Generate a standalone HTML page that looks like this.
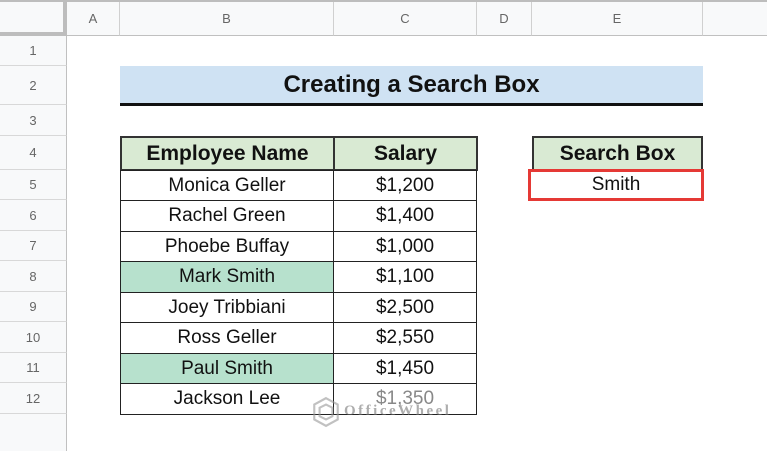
<!DOCTYPE html>
<html><head><style>
body{margin:0;width:767px;height:451px;overflow:hidden;background:#fff;font-family:"Liberation Sans",Arial,sans-serif;position:relative}
div{position:absolute;box-sizing:border-box}
.ch{top:2px;height:34px;background:#f8f9fa;border-right:1px solid #d0d0d0;border-bottom:1px solid #c0c0c0;color:#666;font-size:13px;text-align:center;line-height:33px}
.rh{left:0;width:67px;background:#f8f9fa;border-right:1px solid #c0c0c0;border-bottom:1px solid #d8d8d8;color:#666;font-size:13px;text-align:center}
.c{font-size:19px;color:#111;text-align:center;border:1px solid #222}
.h{background:#d9ead3;font-weight:bold;font-size:21px;border:2px solid #333}
.g{background:#b7e1cd}
</style></head><body>
<div style="left:0;top:0;width:767px;height:2px;background:#bdbdbd"></div>
<div class="ch" style="left:0;width:67px;border-right:4px solid #bdbdbd;border-bottom:4px solid #bdbdbd"></div>
<div class="ch" style="left:67px;width:53px">A</div>
<div class="ch" style="left:120px;width:214px">B</div>
<div class="ch" style="left:334px;width:143px">C</div>
<div class="ch" style="left:477px;width:55px">D</div>
<div class="ch" style="left:532px;width:171px">E</div>
<div class="ch" style="left:703px;width:64px;border-right:none"></div>
<div class="rh" style="top:36px;height:30px;line-height:30px">1</div>
<div class="rh" style="top:66px;height:39px;line-height:39px">2</div>
<div class="rh" style="top:105px;height:31px;line-height:31px">3</div>
<div class="rh" style="top:136px;height:34px;line-height:34px">4</div>
<div class="rh" style="top:170px;height:30px;line-height:30px">5</div>
<div class="rh" style="top:200px;height:31px;line-height:31px">6</div>
<div class="rh" style="top:231px;height:30px;line-height:30px">7</div>
<div class="rh" style="top:261px;height:31px;line-height:31px">8</div>
<div class="rh" style="top:292px;height:30px;line-height:30px">9</div>
<div class="rh" style="top:322px;height:31px;line-height:31px">10</div>
<div class="rh" style="top:353px;height:30px;line-height:30px">11</div>
<div class="rh" style="top:383px;height:31px;line-height:31px">12</div>
<div class="rh" style="top:414px;height:37px;border-bottom:none"></div>

<div style="left:120px;top:66px;width:583px;height:40px;background:#cfe2f3;border-bottom:3px solid #111;font-weight:bold;font-size:24px;text-align:center;line-height:38px;color:#111">Creating a Search Box</div>

<div class="c h" style="left:120px;top:136px;width:215px;height:35px;line-height:31px">Employee Name</div>
<div class="c h" style="left:333px;top:136px;width:145px;height:35px;line-height:31px">Salary</div>
<div class="c h" style="left:532px;top:136px;width:171px;height:35px;line-height:31px">Search Box</div>
<div style="left:528px;top:169px;width:176px;height:32px;border:3px solid #e53935;font-size:19px;text-align:center;line-height:26px;color:#111">Smith</div>

<div class="c" style="left:120px;top:170px;width:214px;height:31px;line-height:30px">Monica Geller</div>
<div class="c" style="left:333px;top:170px;width:144px;height:31px;line-height:30px">$1,200</div>
<div class="c" style="left:120px;top:200px;width:214px;height:32px;line-height:30px">Rachel Green</div>
<div class="c" style="left:333px;top:200px;width:144px;height:32px;line-height:30px">$1,400</div>
<div class="c" style="left:120px;top:231px;width:214px;height:31px;line-height:29px">Phoebe Buffay</div>
<div class="c" style="left:333px;top:231px;width:144px;height:31px;line-height:29px">$1,000</div>
<div class="c g" style="left:120px;top:261px;width:214px;height:32px;line-height:30px">Mark Smith</div>
<div class="c" style="left:333px;top:261px;width:144px;height:32px;line-height:30px">$1,100</div>
<div class="c" style="left:120px;top:292px;width:214px;height:31px;line-height:29px">Joey Tribbiani</div>
<div class="c" style="left:333px;top:292px;width:144px;height:31px;line-height:29px">$2,500</div>
<div class="c" style="left:120px;top:322px;width:214px;height:32px;line-height:30px">Ross Geller</div>
<div class="c" style="left:333px;top:322px;width:144px;height:32px;line-height:30px">$2,550</div>
<div class="c g" style="left:120px;top:353px;width:214px;height:31px;line-height:29px">Paul Smith</div>
<div class="c" style="left:333px;top:353px;width:144px;height:31px;line-height:29px">$1,450</div>
<div class="c" style="left:120px;top:383px;width:214px;height:32px;line-height:30px">Jackson Lee</div>
<div class="c" style="left:333px;top:383px;width:144px;height:32px;line-height:30px;color:#888">$1,350</div>
<div style="left:312px;top:396px;width:150px;height:32px;opacity:.6">
<svg width="28" height="32" viewBox="0 0 26 30" style="position:absolute;left:0;top:0"><path d="M13 2 L24 8 V22 L13 28 L2 22 V8 Z" fill="none" stroke="#999" stroke-width="2"/><path d="M13 8 L19 11 V19 L13 22 L7 19 V11 Z" fill="none" stroke="#999" stroke-width="2"/></svg>
<div style="left:32px;top:7px;font-family:'Liberation Serif',serif;font-size:15px;letter-spacing:2.5px;color:#777;font-weight:bold">OfficeWheel</div>
</div>
</body></html>
